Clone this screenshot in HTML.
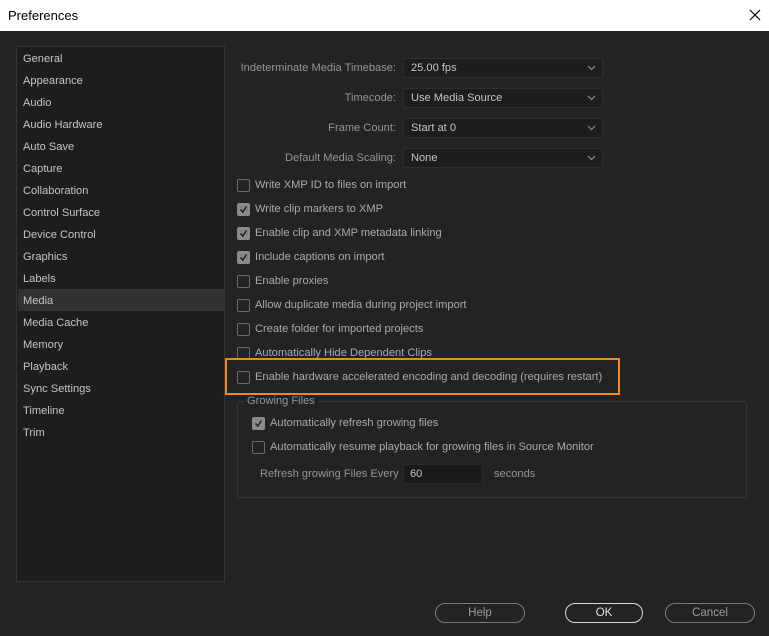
<!DOCTYPE html>
<html><head><style>
*{margin:0;padding:0;box-sizing:border-box}
body{width:769px;height:636px;background:#232323;font-family:"Liberation Sans",sans-serif;font-size:11.1px;color:#b4b4b4;position:relative;overflow:hidden}
.abs{position:absolute;white-space:nowrap}
.title{position:absolute;left:0;top:0;width:769px;height:31px;background:#fff;color:#000;font-size:13px}
.list{position:absolute;left:16px;top:46px;width:209px;height:536px;background:#1d1d1d;border:1px solid #353535}
.it{position:absolute;left:6px;line-height:22px;color:#c4c4c4}
.sel{position:absolute;left:1px;top:242px;width:206px;height:22px;background:#323232}
.lbl{position:absolute;right:373px;color:#959595}
.dd{position:absolute;left:403px;width:200px;height:20px;background:#1d1d1d;border:1px solid #2e2e2e;border-radius:2px;color:#c4c4c4;line-height:18px;padding-left:7px}
.dd svg{position:absolute;right:6px;top:6px}
.cb{position:absolute;width:13px;height:13px;border:1.5px solid #6a6a6a;border-radius:2px}
.cb.on{background:#8a8a8a;border-color:#8a8a8a}
.cb.on svg{position:absolute;left:1px;top:1px}
.ct{position:absolute;line-height:14px;color:#a9a9a9;white-space:nowrap}
.btn{position:absolute;top:603px;height:20px;border:1px solid #7a7a7a;border-radius:10px;text-align:center;line-height:18px;color:#9a9a9a;font-size:11.5px}
</style></head><body>
<div class="title"><span class="abs" style="left:8px;top:8px">Preferences</span>
<svg class="abs" style="left:749px;top:9px" width="12" height="12"><path d="M1 1L11 11M11 1L1 11" stroke="#000" stroke-width="1.2"/></svg></div>
<div class="list"><div class="sel"></div>
<div class="it" style="top:1px">General</div><div class="it" style="top:23px">Appearance</div><div class="it" style="top:45px">Audio</div><div class="it" style="top:67px">Audio Hardware</div><div class="it" style="top:89px">Auto Save</div><div class="it" style="top:111px">Capture</div><div class="it" style="top:133px">Collaboration</div><div class="it" style="top:155px">Control Surface</div><div class="it" style="top:177px">Device Control</div><div class="it" style="top:199px">Graphics</div><div class="it" style="top:221px">Labels</div><div class="it" style="top:243px">Media</div><div class="it" style="top:265px">Media Cache</div><div class="it" style="top:287px">Memory</div><div class="it" style="top:309px">Playback</div><div class="it" style="top:331px">Sync Settings</div><div class="it" style="top:353px">Timeline</div><div class="it" style="top:375px">Trim</div>
</div>
<div class="lbl" style="top:62px">Indeterminate Media Timebase:</div>
<div class="lbl" style="top:92px">Timecode:</div>
<div class="lbl" style="top:122px">Frame Count:</div>
<div class="lbl" style="top:152px">Default Media Scaling:</div>
<div class="dd" style="top:58px">25.00 fps<svg width="9" height="6"><path d="M1 1L4.5 4.5L8 1" stroke="#999" fill="none"/></svg></div>
<div class="dd" style="top:88px">Use Media Source<svg width="9" height="6"><path d="M1 1L4.5 4.5L8 1" stroke="#999" fill="none"/></svg></div>
<div class="dd" style="top:118px">Start at 0<svg width="9" height="6"><path d="M1 1L4.5 4.5L8 1" stroke="#999" fill="none"/></svg></div>
<div class="dd" style="top:148px">None<svg width="9" height="6"><path d="M1 1L4.5 4.5L8 1" stroke="#999" fill="none"/></svg></div>

<div class="cb" style="left:237px;top:179px"></div><div class="ct" style="left:255px;top:178px">Write XMP ID to files on import</div>
<div class="cb on" style="left:237px;top:203px"><svg width="9" height="9"><path d="M1.5 4.5L3.8 7L7.5 1.5" stroke="#222" stroke-width="1.5" fill="none"/></svg></div><div class="ct" style="left:255px;top:202px">Write clip markers to XMP</div>
<div class="cb on" style="left:237px;top:227px"><svg width="9" height="9"><path d="M1.5 4.5L3.8 7L7.5 1.5" stroke="#222" stroke-width="1.5" fill="none"/></svg></div><div class="ct" style="left:255px;top:226px">Enable clip and XMP metadata linking</div>
<div class="cb on" style="left:237px;top:251px"><svg width="9" height="9"><path d="M1.5 4.5L3.8 7L7.5 1.5" stroke="#222" stroke-width="1.5" fill="none"/></svg></div><div class="ct" style="left:255px;top:250px">Include captions on import</div>
<div class="cb" style="left:237px;top:275px"></div><div class="ct" style="left:255px;top:274px">Enable proxies</div>
<div class="cb" style="left:237px;top:299px"></div><div class="ct" style="left:255px;top:298px">Allow duplicate media during project import</div>
<div class="cb" style="left:237px;top:323px"></div><div class="ct" style="left:255px;top:322px">Create folder for imported projects</div>
<div class="cb" style="left:237px;top:347px"></div><div class="ct" style="left:255px;top:346px">Automatically Hide Dependent Clips</div>
<div class="abs" style="left:225px;top:358px;width:395px;height:37px;border:2px solid #f08a1c;background:#232323"></div>
<div class="cb" style="left:237px;top:371px"></div><div class="ct" style="left:255px;top:370px">Enable hardware accelerated encoding and decoding (requires restart)</div>

<div class="abs" style="left:237px;top:401px;width:510px;height:97px;border:1px solid #353535;border-radius:3px"></div>
<div class="abs" style="left:244px;top:395px;padding:0 3px;background:#232323;color:#959595">Growing Files</div>
<div class="cb on" style="left:252px;top:417px"><svg width="9" height="9"><path d="M1.5 4.5L3.8 7L7.5 1.5" stroke="#222" stroke-width="1.5" fill="none"/></svg></div><div class="ct" style="left:270px;top:416px">Automatically refresh growing files</div>
<div class="cb" style="left:252px;top:441px"></div><div class="ct" style="left:270px;top:440px">Automatically resume playback for growing files in Source Monitor</div>
<div class="abs" style="left:260px;top:468px;color:#959595">Refresh growing Files Every</div>
<div class="abs" style="left:403px;top:464px;width:80px;height:20px;background:#1a1a1a;border:1px solid #2a2a2a;border-radius:2px;color:#c4c4c4;line-height:18px;padding-left:6px">60</div>
<div class="abs" style="left:494px;top:468px;color:#959595">seconds</div>

<div class="btn" style="left:435px;width:90px">Help</div>
<div class="btn" style="left:565px;width:78px;border-color:#d8d8d8;color:#e0e0e0">OK</div>
<div class="btn" style="left:665px;width:90px">Cancel</div>
</body></html>
